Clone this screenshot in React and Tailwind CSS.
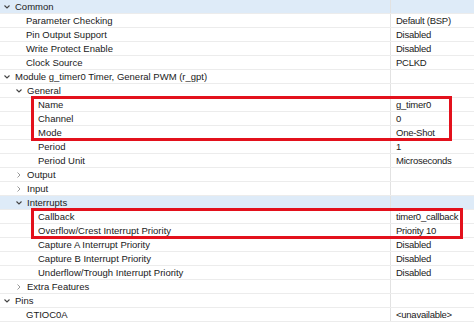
import React from "react";

const rows = [
  { label: "Common", level: 0, open: true, hl: true },
  { label: "Parameter Checking", level: 1, value: "Default (BSP)" },
  { label: "Pin Output Support", level: 1, value: "Disabled" },
  { label: "Write Protect Enable", level: 1, value: "Disabled" },
  { label: "Clock Source", level: 1, value: "PCLKD" },
  { label: "Module g_timer0 Timer, General PWM (r_gpt)", level: 0, open: true },
  { label: "General", level: 1, open: true },
  { label: "Name", level: 2, value: "g_timer0" },
  { label: "Channel", level: 2, value: "0" },
  { label: "Mode", level: 2, value: "One-Shot" },
  { label: "Period", level: 2, value: "1" },
  { label: "Period Unit", level: 2, value: "Microseconds" },
  { label: "Output", level: 1, open: false },
  { label: "Input", level: 1, open: false },
  { label: "Interrupts", level: 1, open: true, hl: true },
  { label: "Callback", level: 2, value: "timer0_callback" },
  { label: "Overflow/Crest Interrupt Priority", level: 2, value: "Priority 10" },
  { label: "Capture A Interrupt Priority", level: 2, value: "Disabled" },
  { label: "Capture B Interrupt Priority", level: 2, value: "Disabled" },
  { label: "Underflow/Trough Interrupt Priority", level: 2, value: "Disabled" },
  { label: "Extra Features", level: 1, open: false },
  { label: "Pins", level: 0, open: true },
  { label: "GTIOC0A", level: 1, value: "<unavailable>" },
];

function Chevron({ open }) {
  return open ? (
    <svg width="8" height="8" viewBox="0 0 8 8" className="shrink-0">
      <path d="M1.5 2.5 L4 5 L6.5 2.5" fill="none" stroke="#444" strokeWidth="1.1" />
    </svg>
  ) : (
    <svg width="8" height="8" viewBox="0 0 8 8" className="shrink-0">
      <path d="M2.5 1.5 L5 4 L2.5 6.5" fill="none" stroke="#999" strokeWidth="1" />
    </svg>
  );
}

function Row({ r }) {
  const hasChevron = r.open !== undefined;
  const indent = ["pl-[3px]", "pl-[15px]", "pl-[26px]"];
  const textIndent = ["pl-[15px]", "pl-[26px]", "pl-[38px]"];
  return (
    <div
      className={`flex h-[14px] border-b border-[#ececec] ${
        r.hl ? "bg-[#deebf8]" : "bg-white"
      }`}
    >
      <div
        className={`flex items-center w-[391px] border-r border-[#e2e2e2] ${
          hasChevron ? indent[r.level] : textIndent[r.level]
        }`}
      >
        {hasChevron && (
          <span className="w-[12px] flex items-center">
            <Chevron open={r.open} />
          </span>
        )}
        <span className="whitespace-nowrap">{r.label}</span>
      </div>
      <div className="flex-1 flex items-center pl-[5px] whitespace-nowrap tracking-[-0.25px]">
        {r.value || ""}
      </div>
    </div>
  );
}

export default function App() {
  return (
    <div
      className="relative w-[474px] h-[322px] overflow-hidden bg-white text-[#1a1a1a] text-[9.5px] leading-none"
      style={{ fontFamily: '"Liberation Sans", Arial, sans-serif' }}
    >
      {rows.map((r, i) => (
        <Row key={i} r={r} />
      ))}
      {/* red annotation boxes */}
      <div className="absolute left-[31px] top-[96px] w-[421px] h-[45px] border-[3px] border-[#e3111c] pointer-events-none" />
      <div className="absolute left-[31px] top-[208px] w-[432px] h-[31px] border-[3px] border-[#e3111c] pointer-events-none" />
    </div>
  );
}
